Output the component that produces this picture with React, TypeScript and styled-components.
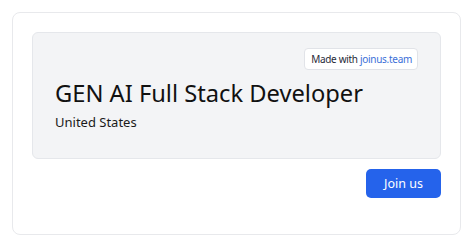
import React from 'react';
import styled, { createGlobalStyle } from 'styled-components';

const GlobalStyle = createGlobalStyle`
    body {
        margin: 0;
        background: #ffffff;
        font-family: 'Noto Sans', 'Open Sans', sans-serif;
        color: #111827;
    }
`;

const App = () => {
    return (
        <>
            <GlobalStyle />
            <Page>
                <Card>
                    <Banner>
                        <BadgeRow>
                            <Badge>
                                Made with <BadgeLink href="#">joinus.team</BadgeLink>
                            </Badge>
                        </BadgeRow>
                        <Title>GEN AI Full Stack Developer</Title>
                        <Location>United States</Location>
                    </Banner>
                    <Actions>
                        <JoinButton>Join us</JoinButton>
                    </Actions>
                </Card>
            </Page>
        </>
    );
};

const Page = styled.div`
    padding: 12px 13px 12px 12px;
`;

const Card = styled.div`
    height: 223px;
    box-sizing: border-box;
    border: 1px solid #e8e9ec;
    border-radius: 8px;
    padding: 19px;
    display: flex;
    flex-direction: column;
    gap: 10px;
`;

const Banner = styled.div`
    background: #f3f4f6;
    border: 1px solid #e5e7eb;
    border-radius: 6px;
    padding: 15px 22px 27px 22px;
    display: flex;
    flex-direction: column;
`;

const BadgeRow = styled.div`
    display: flex;
    justify-content: flex-end;
`;

const Badge = styled.div`
    box-sizing: border-box;
    background: #ffffff;
    border: 1px solid #e1e3e8;
    border-radius: 4px;
    padding: 0 5px 0 6px;
    height: 22px;
    line-height: 20px;
    font-size: 10px;
    letter-spacing: -0.3px;
    color: #1f2937;
    white-space: nowrap;
`;

const BadgeLink = styled.a`
    color: #3b6fd8;
    text-decoration: none;
`;

const Title = styled.h1`
    margin: 7px 0 0 0;
    font-size: 23.7px;
    font-weight: 400;
    line-height: 33px;
    color: #111111;
`;

const Location = styled.div`
    margin-top: 3px;
    font-size: 13px;
    line-height: 18px;
    color: #1a1a1a;
`;

const Actions = styled.div`
    display: flex;
    justify-content: flex-end;
`;

const JoinButton = styled.button`
    width: 75px;
    height: 29px;
    border: none;
    border-radius: 5px;
    background: #2563eb;
    color: #ffffff;
    font-family: 'Noto Sans', 'Open Sans', sans-serif;
    font-size: 12.5px;
    cursor: pointer;
`;

export default App;
